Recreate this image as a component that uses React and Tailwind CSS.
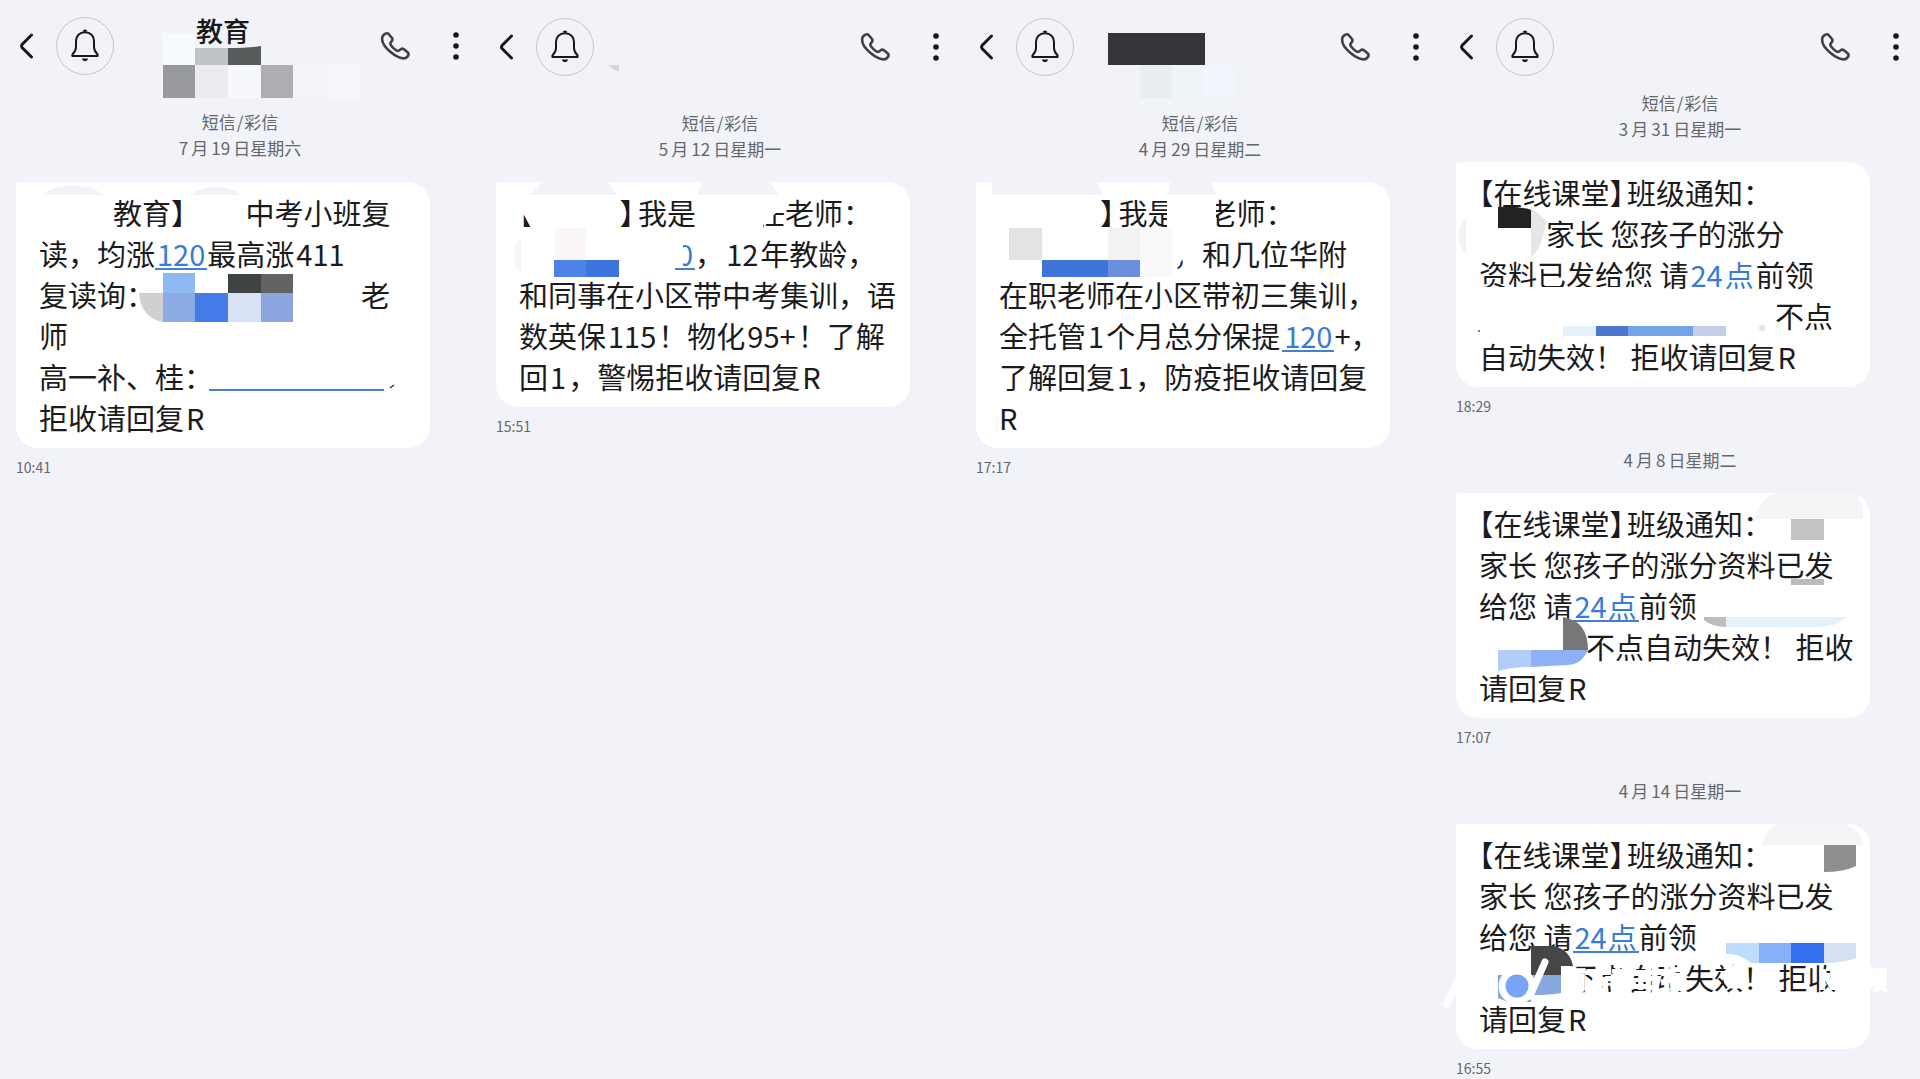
const FONT = "font-['Noto_Sans_CJK_SC',sans-serif]";

function BackIcon() {
  return (
    <svg width="16" height="28" viewBox="0 0 16 28" fill="none" stroke="#17181a" strokeWidth="3" strokeLinecap="round" strokeLinejoin="round">
      <path d="M13.5 3 L4 12.5 Q3 14 4 15.5 L13.5 25" />
    </svg>
  );
}

function BellIcon() {
  return (
    <svg width="28" height="34" viewBox="0 0 28 34" fill="none" stroke="#17181a" strokeWidth="2" strokeLinejoin="round">
      <path d="M14 3.2C8.5 3.2 5 7 5 12v6c0 3.6-1 5-3.6 7.4V27h25.2v-1.6C24 23 23 21.6 23 18v-6c0-5-3.5-8.8-9-8.8Z" />
      <path d="M12.5 2.5a1.6 1.6 0 0 1 3 0" />
      <path d="M11 29.5h6c-.3 1.8-1.5 2.6-3 2.6s-2.7-.8-3-2.6Z" fill="#17181a" stroke="none" />
    </svg>
  );
}

function PhoneIcon() {
  return (
    <svg width="30" height="30" viewBox="0 0 30 30" fill="none" stroke="#3e4043" strokeWidth="2.6" strokeLinejoin="round">
      <path d="M2.5 5.5C4 2.8 6.8 1.2 8.6 3L12 7c1 1.6.4 2.7-.9 3.9-1.2 1.2-1 2.3.2 3.9 1.5 2 3.2 3.6 5.1 4.6 1.5.8 2.5.5 3.5-.6 1.200-1.200 2.400-1.500 3.800-.7l4.100 3.300c1.700 1.900.3 4.200-2.200 5.600C18.500 30-.5 14.500 2.500 5.500Z" />
    </svg>
  );
}

function MoreIcon() {
  return (
    <svg width="8" height="30" viewBox="0 0 8 30" fill="#17181a">
      <circle cx="4" cy="4" r="2.8" />
      <circle cx="4" cy="15" r="2.8" />
      <circle cx="4" cy="26" r="2.8" />
    </svg>
  );
}

// items: [x, y, width, height, fill]
function Blocks({ items }) {
  return items.map(([x, y, w, h, fill]) => <rect key={`${x}-${y}`} x={x} y={y} width={w} height={h} fill={fill} />);
}

function Overlay({ children }) {
  return (
    <svg className="absolute left-0 top-0 overflow-visible pointer-events-none" width="415" height="100" aria-hidden="true">
      {children}
    </svg>
  );
}

function Header({ title, className, mask }) {
  return (
    <header className={`relative flex items-start pl-[18px] pr-5 ${className}`}>
      <div className="flex h-[58px] items-center gap-[22px]">
        <button type="button" aria-label="返回"><BackIcon /></button>
        <button type="button" aria-label="通知" className="flex h-[58px] w-[58px] items-center justify-center rounded-full border border-[#c6c7cb]">
          <BellIcon />
        </button>
      </div>
      {title && <h1 className="ml-[82px] text-[27px] leading-[28px] font-medium text-[#17181a]">{title}</h1>}
      <div className="ml-auto flex h-[58px] items-center gap-[42px]">
        <button type="button" aria-label="拨打电话"><PhoneIcon /></button>
        <button type="button" aria-label="更多"><MoreIcon /></button>
      </div>
      {mask && <Overlay>{mask}</Overlay>}
    </header>
  );
}

function DateLabel({ month, day, week, className = '' }) {
  return (
    <p className={`text-center text-[17px] leading-[26px] text-[#66676b] ${className}`}>
      <span className="mr-[3px]">{month}</span>月<span className="mx-[3px]">{day}</span>日星期{week}
    </p>
  );
}

function Channel() {
  return <p className="text-center text-[17px] leading-[26px] text-[#66676b]">短信<span className="mx-px">/</span>彩信</p>;
}

function Message({ time, mask, children }) {
  return (
    <article className="pl-4">
      <div className="relative w-full max-w-[414px] rounded-[22px] rounded-tl-[4px] bg-white pt-2.5 pb-2.5 pl-[23px] text-[29px] leading-[41px] text-[#1b1b1c]">
        {children}
        <Overlay>{mask}</Overlay>
      </div>
      <time className="mt-2 block text-[14px] leading-[22px] text-[#66676b]">{time}</time>
    </article>
  );
}

function Line({ children, className = '' }) {
  return <p className={`whitespace-nowrap ${className}`}>{children}</p>;
}

function Num({ children }) {
  return <span className="mx-0.5">{children}</span>;
}

function Link({ children, className = 'border-b-2' }) {
  return (
    <a href="#" className={`inline-block h-[37px] border-[#3f7fd6] px-0.5 align-top text-[#3a7bd5] ${className}`}>
      {children}
    </a>
  );
}

function Bracket({ children, className = '' }) {
  return <span className={`[font-feature-settings:'halt'] ${className}`}>{children}</span>;
}

function ClassNotice() {
  return (
    <Line>
      <Bracket>【</Bracket>在线课堂<Bracket className="mr-[3px]">】</Bracket>班级通知：
    </Line>
  );
}

function Watermark() {
  return (
    <div className="absolute top-[140px] left-[105px] flex w-[326px] justify-between text-[25px] leading-[28px] font-bold text-white [-webkit-text-stroke:2px_white] pointer-events-none">
      <span>南方都市报</span>
      <span>N视频</span>
    </div>
  );
}

export default function App() {
  return (
    <main lang="zh-CN" className={`grid min-h-screen grid-cols-4 overflow-hidden bg-[#f1f3f8] ${FONT}`}>
      <section>
        <Header
          title="教育"
          className="h-[109px] pt-[17px]"
          mask={
            <>
              <Blocks
                items={[
                  [163, 33, 32, 32, '#f7fafc'],
                  [195, 48, 33, 17, '#bec3c5'],
                  [163, 65, 32, 33, '#97999e'],
                  [195, 65, 33, 33, '#ececf0'],
                  [228, 65, 33, 33, '#f7f8fe'],
                  [261, 65, 32, 33, '#adaeb3'],
                  [293, 65, 35, 33, '#f4f5fb'],
                  [328, 65, 32, 33, '#f6f7fc'],
                ]}
              />
              <path d="M228 48Q248 48 261 46V65H228Z" fill="#575b5c" />
            </>
          }
        />
        <Channel />
        <DateLabel month="7" day="19" week="六" className="mb-[21px]" />
        <Message
          time="10:41"
          mask={
            <>
              <path d="M27 13Q38 3 57 3T87 13Z M176 13Q184 5 200 5T224 13Z" fill="#f2f3f5" />
              <path d="M123 111H147V140Q125 136 123 111Z" fill="#cfcfd1" />
              <Blocks
                items={[
                  [147, 91, 32, 20, '#8fb9f3'],
                  [147, 111, 32, 29, '#8cabe5'],
                  [179, 111, 33, 29, '#437ce9'],
                  [212, 92, 33, 19, '#3f4341'],
                  [245, 92, 32, 19, '#636363'],
                  [212, 111, 33, 29, '#d8e2f6'],
                  [245, 111, 32, 29, '#8ba5e1'],
                  [193, 207, 175, 2, '#4a7fc9'],
                ]}
              />
              <path d="M374 206L378 203" stroke="#333" strokeWidth="1.5" />
            </>
          }
        >
          <Line className="pl-[74px]">教育<Bracket className="mr-[60px]">】</Bracket>中考小班复</Line>
          <Line>读，均涨<Link>120</Link>最高涨<Num>411</Num></Line>
          <Line>复读询：<span className="ml-[206px]">老</span></Line>
          <Line>师</Line>
          <Line>高一补、桂：</Line>
          <Line>拒收请回复<Num>R</Num></Line>
        </Message>
      </section>

      <section>
        <Header
          className="h-[110px] pt-[18px]"
          mask={<path d="M128 65H139V72Q133 70 128 65Z" fill="#d3d5da" />}
        />
        <Channel />
        <DateLabel month="5" day="12" week="一" className="mb-5" />
        <Message
          time="15:51"
          mask={
            <>
              <path d="M47 0H112L121 13H34Z M206 0H274L282 13H201Z" fill="#f1f3f8" />
              <path d="M22 14H42V48H36L28 33H22Z" fill="#fff" />
              <path d="M257 15H287V29L281 30L267 43V50H257Z" fill="#fff" />
              <path d="M25 56Q18 62 18 74T25 91Z" fill="#f8f4f9" />
              <Blocks
                items={[
                  [59, 46, 31, 32, '#fbf6f9'],
                  [58, 78, 32, 17, '#4d82e8'],
                  [90, 78, 33, 17, '#3d74dd'],
                  [176, 54, 11, 30, '#fff'],
                ]}
              />
            </>
          }
        >
          <Line>
            <Bracket>【</Bracket><Bracket className="ml-[86px] mr-1">】</Bracket>我是<span className="ml-[60px]">任老师：</span>
          </Line>
          <Line className="pl-[156px]"><Link>0</Link>，<Num>12</Num>年教龄，</Line>
          <Line>和同事在小区带中考集训，语</Line>
          <Line>数英保<Num>115</Num>！物化<Num>95+</Num>！了解</Line>
          <Line>回<Num>1</Num>，警惕拒收请回复<Num>R</Num></Line>
        </Message>
      </section>

      <section>
        <Header
          className="h-[110px] pt-[18px]"
          mask={
            <Blocks
              items={[
                [148, 33, 97, 32, '#34353b'],
                [180, 65, 32, 33, '#e8eef1'],
                [212, 65, 31, 33, '#edf5f9'],
                [243, 65, 32, 33, '#f2f6fc'],
              ]}
            />
          }
        />
        <Channel />
        <DateLabel month="4" day="29" week="二" className="mb-5" />
        <Message
          time="17:17"
          mask={
            <>
              <path d="M16 0H121L126 13H16Z M194 0H236L240 13H192Z" fill="#f1f3f8" />
              <Blocks
                items={[
                  [191, 14, 49, 32, '#fff'],
                  [33, 46, 33, 32, '#e3e3e5'],
                  [132, 46, 32, 32, '#f2f2f3'],
                  [164, 46, 32, 49, '#f9f9fa'],
                  [66, 78, 66, 17, '#3f74d9'],
                  [132, 78, 32, 17, '#6a90dd'],
                ]}
              />
              <path d="M196 68H206V78L199 90H196Z" fill="#fff" />
            </>
          }
        >
          <Line className="pl-[101px]">
            <Bracket className="mr-1">】</Bracket>我是<span className="ml-[31px]">老师：</span>
          </Line>
          <Line className="pl-[174px]">，和几位华附</Line>
          <Line>在职老师在小区带初三集训，</Line>
          <Line>全托管<Num>1</Num>个月总分保提<Link className="ml-0.5 border-b-2">120</Link>+，</Line>
          <Line>了解回复<Num>1</Num>，防疫拒收请回复</Line>
          <Line>R</Line>
        </Message>
      </section>

      <section>
        <Header className="h-[90px] pt-[18px]" />
        <Channel />
        <DateLabel month="3" day="31" week="一" className="mb-5" />
        <Message
          time="18:29"
          mask={
            <>
              <path d="M42 45H60Q70 46 75 48V66H42Z" fill="#222" />
              <path d="M75 46Q84 52 91 60L85 80Q82 90 75 95Z" fill="#e6e6e7" />
              <path d="M10 56Q3 62 3 74T10 93Z" fill="#f3f3f4" />
              <Blocks
                items={[
                  [22, 125, 184, 7, '#fff'],
                  [107, 164, 33, 10, '#e4f1fb'],
                  [140, 164, 32, 10, '#4a78cf'],
                  [172, 164, 65, 10, '#72a4e8'],
                  [237, 164, 33, 10, '#c3cfe8'],
                ]}
              />
              <circle cx="23" cy="169" r="1" fill="#555" />
              <circle cx="306" cy="166" r="3" fill="#e4e4e6" />
            </>
          }
        >
          <ClassNotice />
          <Line className="pl-[67px]">家长 您孩子的涨分</Line>
          <Line>资料已发给您 请<Link className="border-b-0"><span className="mr-0.5">24</span>点</Link>前领</Line>
          <Line className="pl-[296px]">不点</Line>
          <Line>自动失效！ 拒收请回复<Num>R</Num></Line>
        </Message>

        <DateLabel month="4" day="8" week="二" className="mt-[30px] mb-5" />
        <Message
          time="17:07"
          mask={
            <>
              <path d="M299 26Q304 5 320 0H400Q408 12 407 26Z" fill="#f3f5f6" />
              <Blocks
                items={[
                  [335, 26, 33, 21, '#c3c3c5'],
                  [335, 86, 33, 6, '#bbbbbd'],
                ]}
              />
              <path d="M107 124Q132 128 132 157H107Z" fill="#777" />
              <path d="M42 157H75V174Q55 174 42 178Z" fill="#b0cef7" />
              <path d="M75 157H132Q126 171 112 172L75 174Z" fill="#8eb1f5" />
              <path d="M248 124H270V134Q256 134 248 127Z" fill="#bdbdbf" />
              <path d="M270 124H391Q380 134 362 134H270Z" fill="#e3f1fd" />
            </>
          }
        >
          <ClassNotice />
          <Line>家长 您孩子的涨分资料已发</Line>
          <Line>给您 请<Link><span className="mr-px">24</span>点</Link>前领</Line>
          <Line className="pl-[107px]">不点自动失效！ 拒收</Line>
          <Line>请回复<Num>R</Num></Line>
        </Message>

        <DateLabel month="4" day="14" week="一" className="mt-[30px] mb-5" />
        <Message
          time="16:55"
          mask={
            <>
              <path d="M306 21Q310 5 322 0H388Q406 6 407 21Z" fill="#f3f5f6" />
              <path d="M368 21H400V42Q388 48 368 48Z" fill="#8f8f8f" />
              <path d="M270 119H303V139H295Q285 130 270 130Z" fill="#bfdcfb" />
              <path d="M368 119H400V134Q388 139 368 139Z" fill="#d5e0f3" />
              <path d="M75 122H98Q114 126 117 142H105V151H75Z" fill="#464646" />
              <path d="M75 151H105V169Q95 171 75 171Z" fill="#8aa8e0" />
              <Blocks
                items={[
                  [303, 119, 32, 20, '#86b0f7'],
                  [335, 119, 33, 20, '#3370ee'],
                  [42, 151, 33, 27, '#79a3f5'],
                ]}
              />
              <g fill="none" stroke="#fff" strokeWidth="7" strokeLinecap="round">
                <circle cx="61" cy="162" r="15" fill="#79a3f5" />
                <path d="M89 138L74 172 M-9 180L3 154Q7 148 10 154L19 180" />
              </g>
              <path d="M42 174L60 181H42Z" fill="#fff" />
              <circle cx="279" cy="153" r="12" fill="#fff" />
            </>
          }
        >
          <ClassNotice />
          <Line>家长 您孩子的涨分资料已发</Line>
          <Line>给您 请<Link><span className="mr-px">24</span>点</Link>前领</Line>
          <Line className="pl-[90px]">不点自动失效！ 拒收</Line>
          <Line>请回复<Num>R</Num></Line>
          <Watermark />
        </Message>
      </section>
    </main>
  );
}
